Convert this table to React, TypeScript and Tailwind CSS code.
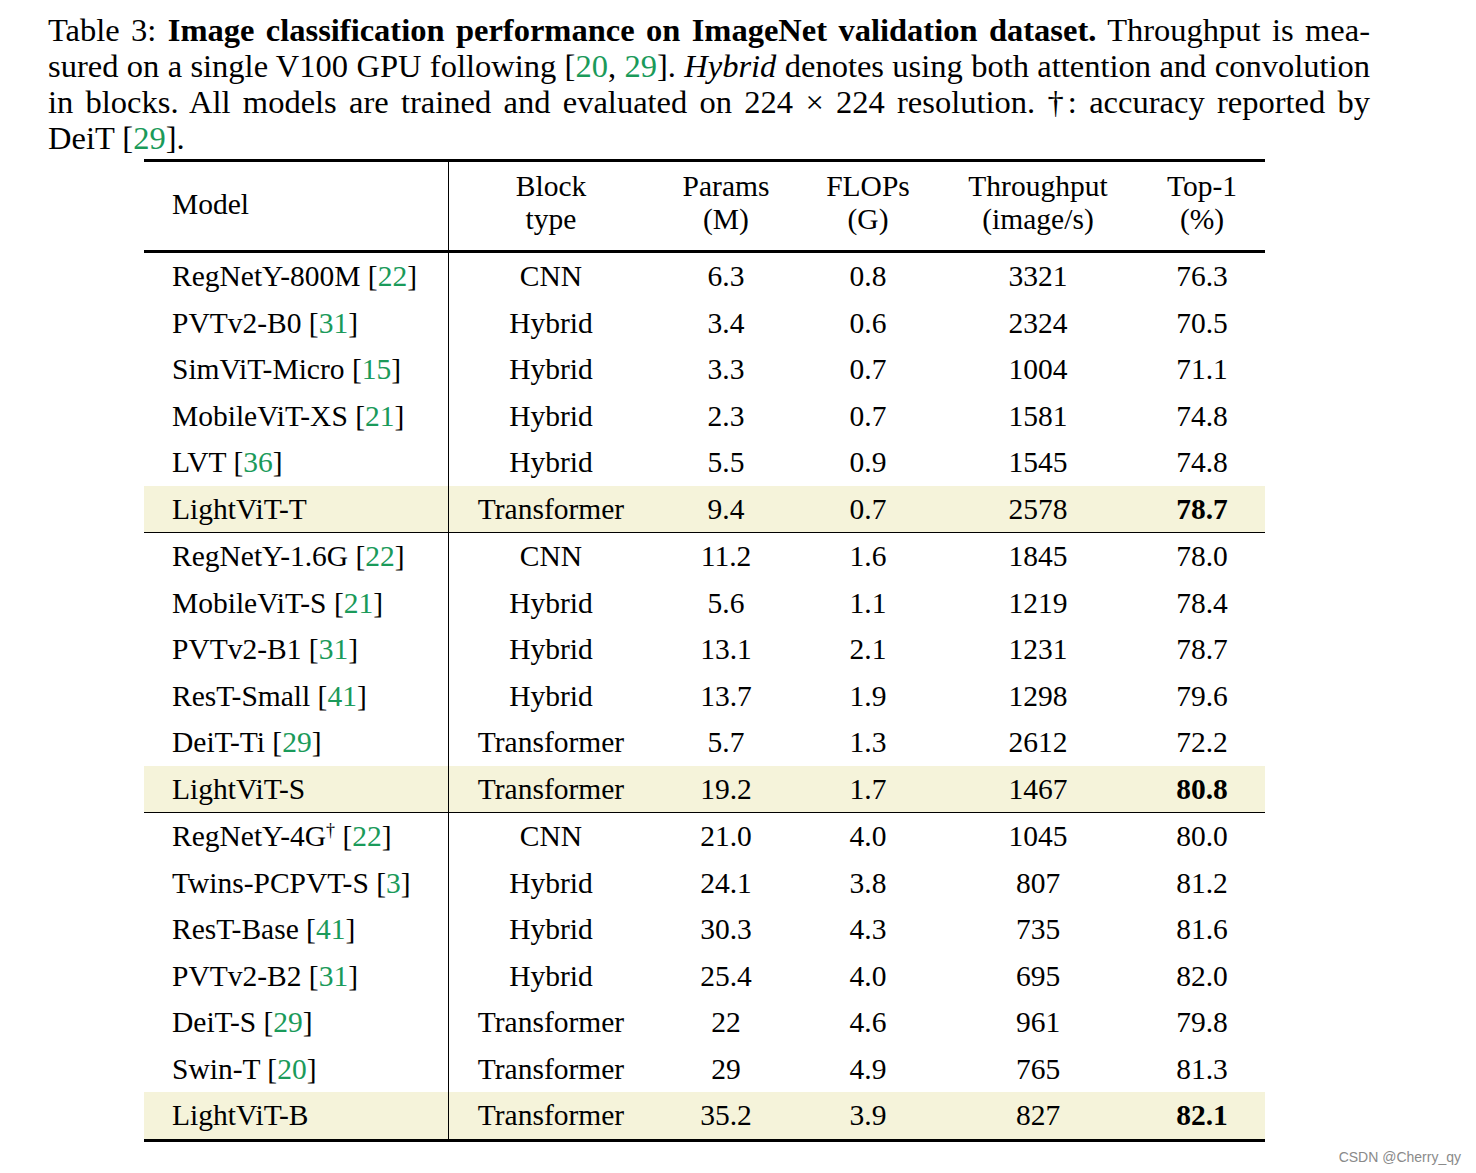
import React from "react";

type Row = {
  model: string;
  sup?: string;
  cite?: string;
  block: string;
  params: string;
  flops: string;
  tput: string;
  top1: string;
  ours?: boolean;
};

const sections: Row[][] = [
  [
    { model: "RegNetY-800M", cite: "22", block: "CNN", params: "6.3", flops: "0.8", tput: "3321", top1: "76.3" },
    { model: "PVTv2-B0", cite: "31", block: "Hybrid", params: "3.4", flops: "0.6", tput: "2324", top1: "70.5" },
    { model: "SimViT-Micro", cite: "15", block: "Hybrid", params: "3.3", flops: "0.7", tput: "1004", top1: "71.1" },
    { model: "MobileViT-XS", cite: "21", block: "Hybrid", params: "2.3", flops: "0.7", tput: "1581", top1: "74.8" },
    { model: "LVT", cite: "36", block: "Hybrid", params: "5.5", flops: "0.9", tput: "1545", top1: "74.8" },
    { model: "LightViT-T", block: "Transformer", params: "9.4", flops: "0.7", tput: "2578", top1: "78.7", ours: true },
  ],
  [
    { model: "RegNetY-1.6G", cite: "22", block: "CNN", params: "11.2", flops: "1.6", tput: "1845", top1: "78.0" },
    { model: "MobileViT-S", cite: "21", block: "Hybrid", params: "5.6", flops: "1.1", tput: "1219", top1: "78.4" },
    { model: "PVTv2-B1", cite: "31", block: "Hybrid", params: "13.1", flops: "2.1", tput: "1231", top1: "78.7" },
    { model: "ResT-Small", cite: "41", block: "Hybrid", params: "13.7", flops: "1.9", tput: "1298", top1: "79.6" },
    { model: "DeiT-Ti", cite: "29", block: "Transformer", params: "5.7", flops: "1.3", tput: "2612", top1: "72.2" },
    { model: "LightViT-S", block: "Transformer", params: "19.2", flops: "1.7", tput: "1467", top1: "80.8", ours: true },
  ],
  [
    { model: "RegNetY-4G", sup: "†", cite: "22", block: "CNN", params: "21.0", flops: "4.0", tput: "1045", top1: "80.0" },
    { model: "Twins-PCPVT-S", cite: "3", block: "Hybrid", params: "24.1", flops: "3.8", tput: "807", top1: "81.2" },
    { model: "ResT-Base", cite: "41", block: "Hybrid", params: "30.3", flops: "4.3", tput: "735", top1: "81.6" },
    { model: "PVTv2-B2", cite: "31", block: "Hybrid", params: "25.4", flops: "4.0", tput: "695", top1: "82.0" },
    { model: "DeiT-S", cite: "29", block: "Transformer", params: "22", flops: "4.6", tput: "961", top1: "79.8" },
    { model: "Swin-T", cite: "20", block: "Transformer", params: "29", flops: "4.9", tput: "765", top1: "81.3" },
    { model: "LightViT-B", block: "Transformer", params: "35.2", flops: "3.9", tput: "827", top1: "82.1", ours: true },
  ],
];

const cols = "grid grid-cols-[305px_204px_146px_138px_202px_126px]";

function Cite({ n }: { n: string }) {
  return (
    <>
      [<span className="text-[#1a9a5a]">{n}</span>]
    </>
  );
}

function DataRow({ r }: { r: Row }) {
  return (
    <div className={`${cols} h-[46.5px] leading-[46.5px] ${r.ours ? "bg-[#f5f3da]" : ""}`}>
      <div className="border-r border-black pl-[28px] whitespace-nowrap">
        {r.model}
        {r.sup && <span className="relative -top-[10px] text-[18px] leading-none">{r.sup}</span>}
        {r.cite && (
          <>
            {" "}
            <Cite n={r.cite} />
          </>
        )}
      </div>
      <div className="text-center">{r.block}</div>
      <div className="text-center">{r.params}</div>
      <div className="text-center">{r.flops}</div>
      <div className="text-center">{r.tput}</div>
      <div className={`text-center ${r.ours ? "font-bold" : ""}`}>{r.top1}</div>
    </div>
  );
}

export default function App() {
  const line = "block whitespace-nowrap text-justify [text-align-last:justify]";
  return (
    <div className="relative w-[1476px] h-[1173px] bg-white text-black font-['Liberation_Serif','Times_New_Roman',serif]">
      {/* caption */}
      <div className="pl-[48px] pt-[12px] w-[1370px] text-[32.5px] leading-[36px]">
        <span className={line}>
          Table 3: <b>Image classification performance on ImageNet validation dataset.</b> Throughput is mea-
        </span>
        <span className={line}>
          sured on a single V100 GPU following [<span className="text-[#1a9a5a]">20</span>,{" "}
          <span className="text-[#1a9a5a]">29</span>]. <i>Hybrid</i> denotes using both attention and convolution
        </span>
        <span className={line}>
          in blocks. All models are trained and evaluated on 224 × 224 resolution. †: accuracy reported by
        </span>
        <span className="block">
          DeiT <Cite n="29" />.
        </span>
      </div>

      {/* table */}
      <div className="ml-[144px] mt-[3px] w-[1121px] border-t-[3px] border-b-[3px] border-black text-[29.5px]">
        <div className={`${cols} h-[88px] leading-[33px]`}>
          <div className="border-r border-black pl-[28px] flex items-center pb-[3px]">Model</div>
          {[
            ["Block", "type"],
            ["Params", "(M)"],
            ["FLOPs", "(G)"],
            ["Throughput", "(image/s)"],
            ["Top-1", "(%)"],
          ].map(([a, b]) => (
            <div key={a} className="text-center pt-[8px]">
              <div>{a}</div>
              <div>{b}</div>
            </div>
          ))}
        </div>
        <div className="h-[3px] bg-black" />
        {sections.map((sec, i) => (
          <div key={i} className={i > 0 ? "border-t-[1.5px] border-black" : ""}>
            {sec.map((r) => (
              <DataRow key={r.model} r={r} />
            ))}
          </div>
        ))}
      </div>

      <div className="absolute right-[15px] top-[1147px] text-[14px] text-[#8a8a8a] font-['Liberation_Sans',Arial,sans-serif]">
        CSDN @Cherry_qy
      </div>
    </div>
  );
}
